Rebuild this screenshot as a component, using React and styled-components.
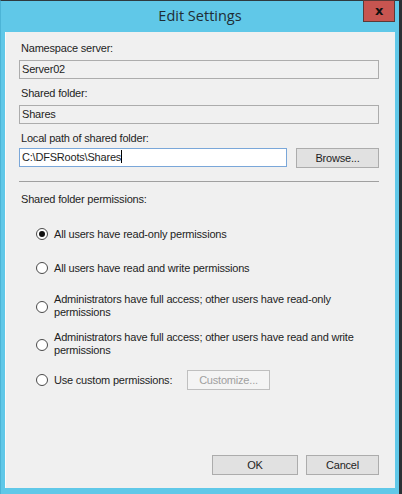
import React, { useState } from 'react';
import styled, { createGlobalStyle } from 'styled-components';

const GlobalStyle = createGlobalStyle`
	body {
		margin: 0;
		font-family: 'Liberation Sans', Arial, sans-serif;
		font-size: 11px;
		letter-spacing: -0.2px;
		color: #1e1e1e;
	}
`;

const Window = styled.div`
	width: 402px;
	height: 494px;
	box-sizing: border-box;
	background-color: #60c8e8;
	border-top: 1px solid #2e3a40;
	border-left: 1px solid #4cb4d6;
	border-right: 3px solid #2b3135;
	display: flex;
	flex-direction: column;
`;
const TitleBar = styled.div`
	height: 31px;
	display: grid;
	grid-template-columns: 1fr auto 1fr;
	align-items: start;
`;
const Title = styled.div`
	grid-column: 2;
	padding-top: 5px;
	font-family: 'Open Sans', sans-serif;
	font-size: 14.5px;
	letter-spacing: 0;
	color: #1f2d35;
`;
const CloseButton = styled.div`
	grid-column: 3;
	justify-self: end;
	margin-right: 4px;
	width: 32px;
	height: 22px;
	margin-top: -1px;
	box-sizing: border-box;
	background-color: #c75550;
	border: 1px solid #5b3a38;
	display: flex;
	align-items: center;
	justify-content: center;
	font-family: 'DejaVu Sans', sans-serif;
	font-weight: bold;
	font-size: 13px;
	color: #111;
	line-height: 1;
	padding-bottom: 2px;
`;
const Panel = styled.div`
	margin: 0 4px;
	height: 456px;
	box-sizing: border-box;
	background-color: #f0f0f0;
	border-left: 1px solid #fbfbfb;
	padding: 10px 16px 0 13px;
	display: flex;
	flex-direction: column;
`;
const Label = styled.div`
	height: 13px;
	line-height: 13px;
	margin-bottom: ${(props) => props.gap ?? 5}px;
	padding-left: 2px;
`;
const Field = styled.div`
	height: 19px;
	box-sizing: border-box;
	border: 1px solid ${(props) => (props.editable ? '#7aa7d9' : '#acacac')};
	background-color: ${(props) => (props.editable ? '#fff' : '#f0f0f0')};
	padding-left: 2px;
	line-height: 17px;
	flex: ${(props) => (props.editable ? '1' : 'none')};
	margin-bottom: 8px;
`;
const Caret = styled.span`
	display: inline-block;
	width: 1px;
	height: 13px;
	background: #000;
	vertical-align: -2px;
`;
const PathRow = styled.div`
	display: flex;
	gap: 9px;
	align-items: flex-start;
	margin-bottom: 6px;
`;
const Button = styled.div`
	width: ${(props) => props.width}px;
	height: 20px;
	box-sizing: border-box;
	border: 1px solid ${(props) => (props.disabled ? '#bfbfbf' : '#acacac')};
	background-color: ${(props) => (props.disabled ? '#f4f4f4' : '#e1e1e1')};
	color: ${(props) => (props.disabled ? '#a0a0a0' : '#1e1e1e')};
	display: flex;
	align-items: center;
	justify-content: center;
`;
const Separator = styled.div`
	height: 1px;
	background-color: #a0a0a0;
	margin: 0 0 11px 0;
`;
const RadioList = styled.div`
	display: flex;
	flex-direction: column;
	padding-left: 17px;
	margin-top: 13px;
`;
const RadioRow = styled.div`
	display: flex;
	align-items: center;
	gap: 6px;
	min-height: ${(props) => props.height || 20}px;
	margin-bottom: ${(props) => props.gap}px;
`;
const RadioCircle = styled.div`
	width: 12px;
	height: 12px;
	box-sizing: border-box;
	flex: none;
	border-radius: 50%;
	border: 1px solid #4a4a4a;
	background: #fff;
	display: flex;
	align-items: center;
	justify-content: center;

	&::after {
		content: '';
		width: 6px;
		height: 6px;
		border-radius: 50%;
		background: ${(props) => (props.checked ? '#111' : 'transparent')};
	}
`;
const RadioText = styled.div`
	line-height: 13px;
	margin-top: ${(props) => (props.multi ? '-3px' : '0')};
`;
const CustomLabel = styled.span`
	width: 127px;
`;
const Footer = styled.div`
	margin-top: auto;
	margin-bottom: 13px;
	display: flex;
	justify-content: flex-end;
	gap: 8px;
`;

const permissions = [
	{ text: 'All users have read-only permissions', gap: 14 },
	{ text: 'All users have read and write permissions', gap: 16 },
	{
		text: 'Administrators have full access; other users have read-only permissions',
		multi: true,
		gap: 12,
	},
	{
		text: 'Administrators have full access; other users have read and write permissions',
		multi: true,
		gap: 12,
	},
];

export default function App() {
	const [selected, setSelected] = useState(0);

	return (
		<>
			<GlobalStyle />
			<Window>
				<TitleBar>
					<Title>Edit Settings</Title>
					<CloseButton>x</CloseButton>
				</TitleBar>
				<Panel>
					<Label>Namespace server:</Label>
					<Field>Server02</Field>
					<Label>Shared folder:</Label>
					<Field>Shares</Field>
					<Label gap={3}>Local path of shared folder:</Label>
					<PathRow>
						<Field editable>
							C:\DFSRoots\Shares
							<Caret />
						</Field>
						<Button width={83}>Browse...</Button>
					</PathRow>
					<Separator />
					<Label>Shared folder permissions:</Label>
					<RadioList>
						{permissions.map((p, i) => (
							<RadioRow
								key={i}
								gap={p.gap}
								height={p.multi ? 26 : 20}
								onClick={() => setSelected(i)}
							>
								<RadioCircle checked={selected === i} />
								<RadioText multi={p.multi}>{p.text}</RadioText>
							</RadioRow>
						))}
						<RadioRow gap={0} onClick={() => setSelected(4)}>
							<RadioCircle checked={selected === 4} />
							<CustomLabel>Use custom permissions:</CustomLabel>
							<Button width={83} disabled>
								Customize...
							</Button>
						</RadioRow>
					</RadioList>
					<Footer>
						<Button width={86}>OK</Button>
						<Button width={73}>Cancel</Button>
					</Footer>
				</Panel>
			</Window>
		</>
	);
}
